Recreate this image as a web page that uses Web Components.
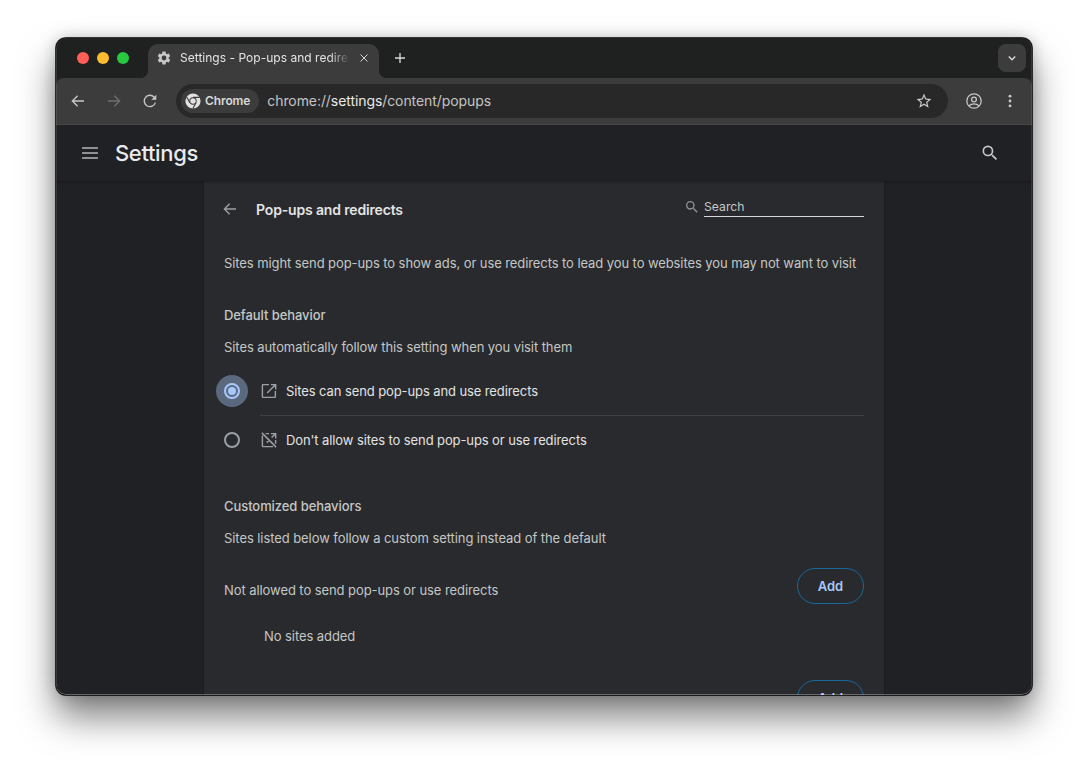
<!DOCTYPE html>
<html>
<head>
<meta charset="utf-8">
<title>Settings - Pop-ups and redirects</title>
<style>
  html, body { margin: 0; height: 100%; background: #fff; overflow: hidden; }
  body { padding: 38px 56px 0; box-sizing: border-box; font-family: Inter, "Liberation Sans", sans-serif; }
</style>
</head>
<body>
<browser-window>
  <tab-strip slot="strip" title-text="Settings - Pop-ups and redirects"></tab-strip>
  <chrome-toolbar slot="toolbar"></chrome-toolbar>
  <settings-header slot="header"></settings-header>
  <popups-page>
    <radio-row checked icon="open" label="Sites can send pop-ups and use redirects"></radio-row>
    <radio-row icon="blocked" divider label="Don't allow sites to send pop-ups or use redirects"></radio-row>
  </popups-page>
</browser-window>

<script>
const ICONS = {
  gear: '<path fill="currentColor" d="M19.14 12.94c.04-.3.06-.61.06-.94s-.02-.64-.07-.94l2.03-1.58a.49.49 0 0 0 .12-.61l-1.92-3.32a.49.49 0 0 0-.59-.22l-2.39.96a7 7 0 0 0-1.62-.94l-.36-2.54a.48.48 0 0 0-.48-.41h-3.84a.48.48 0 0 0-.47.41l-.36 2.54a7.3 7.3 0 0 0-1.62.94l-2.39-.96a.49.49 0 0 0-.59.22L2.74 8.87a.48.48 0 0 0 .12.61l2.03 1.58c-.05.3-.09.63-.09.94s.02.64.07.94l-2.03 1.58a.49.49 0 0 0-.12.61l1.92 3.32c.12.22.37.29.59.22l2.39-.96c.5.38 1.03.7 1.62.94l.36 2.54c.05.24.24.41.48.41h3.84c.24 0 .44-.17.47-.41l.36-2.54a7 7 0 0 0 1.62-.94l2.39.96c.22.08.47 0 .59-.22l1.92-3.32a.47.47 0 0 0-.12-.61l-2.01-1.58zM12 15.6a3.6 3.6 0 1 1 0-7.2 3.6 3.6 0 0 1 0 7.2z"/>',
  close: '<path stroke="currentColor" stroke-width="2" fill="none" d="M5 5l14 14M19 5L5 19"/>',
  plus: '<path stroke="currentColor" stroke-width="2" fill="none" d="M12 4.5v15M4.5 12h15"/>',
  chevron: '<path stroke="currentColor" stroke-width="2.4" fill="none" d="M6.5 9.5L12 15l5.5-5.5"/>',
  back: '<path stroke="currentColor" stroke-width="1.8" fill="none" d="M20 12H5M11.5 5l-7 7 7 7"/>',
  forward: '<path stroke="currentColor" stroke-width="1.8" fill="none" d="M4 12h15M12.5 5l7 7-7 7"/>',
  reload: '<path stroke="currentColor" stroke-width="1.8" fill="none" d="M19.2 14.2A7.6 7.6 0 1 1 17.4 6.6L19.5 8.6"/><path fill="currentColor" d="M20.4 3.8v6.6h-6.6z"/>',
  star: '<path fill="currentColor" d="M22 9.24l-7.19-.62L12 2 9.19 8.63 2 9.24l5.46 4.73L5.82 21 12 17.27 18.18 21l-1.63-7.03zM12 15.4l-3.76 2.27 1-4.28-3.32-2.88 4.38-.38L12 6.1l1.71 4.04 4.38.38-3.32 2.88 1 4.28z"/>',
  account: '<g stroke="currentColor" stroke-width="1.7" fill="none"><circle cx="12" cy="12" r="9.6"/><circle cx="12" cy="10" r="3.2"/><path d="M5.4 18.6c1.6-1.9 4-2.9 6.6-2.9s5 1 6.6 2.9"/></g>',
  dots: '<circle fill="currentColor" cx="12" cy="5.5" r="1.9"/><circle fill="currentColor" cx="12" cy="12" r="1.9"/><circle fill="currentColor" cx="12" cy="18.5" r="1.9"/>',
  menu: '<path stroke="currentColor" stroke-width="1.7" fill="none" d="M2.5 6h19M2.5 12h19M2.5 18h19"/>',
  search: '<path fill="currentColor" d="M15.5 14h-.79l-.28-.27A6.47 6.47 0 0 0 16 9.5 6.5 6.5 0 1 0 9.5 16c1.61 0 3.09-.59 4.23-1.57l.27.28v.79l5 4.99L20.49 19zm-6 0a4.5 4.5 0 1 1 0-9 4.5 4.5 0 0 1 0 9z"/>',
  open: '<path stroke="currentColor" stroke-width="1.9" fill="none" d="M12 3.5H4a.8.8 0 0 0-.8.8v15.4c0 .4.4.8.8.8h15.7c.4 0 .8-.4.8-.8V12M14.5 3.5h6.4v6.4M20.5 3.8L9.5 14.8"/>',
  blocked: '<path stroke="currentColor" stroke-width="1.9" fill="none" d="M3.2 6v14c0 .4.4.8.8.8h13.5M7.5 3.5H12M14.5 3.5h6.4v6.4M20.8 12v5M2.5 2.5l19 19M20.5 3.8l-5 5M12 12.5l-3 3"/>'
};
const icon = (name, size) =>
  `<svg width="${size}" height="${size}" viewBox="0 0 24 24" aria-hidden="true">${ICONS[name]}</svg>`;

class BrowserWindow extends HTMLElement {
  constructor() {
    super();
    this.attachShadow({ mode: 'open' }).innerHTML = `
      <style>
        :host {
          display: flex;
          flex-direction: column;
          position: relative;
          box-sizing: border-box;
          width: 976px;
          height: 657px;
          overflow: hidden;
          border-radius: 10px;
          background: #202124;
          box-shadow: 0 0 0 .5px #000, 0 0 0 1px rgba(0,0,0,.55), 0 22px 36px rgba(0,0,0,.5), 0 0 16px rgba(0,0,0,.22);
          color: #e3e3e3;
        }
        :host::after {
          content: ""; position: absolute; inset: 0; border-radius: 10px; pointer-events: none; z-index: 3;
          box-shadow: inset 0 -1px 0 rgba(255,255,255,.3), inset 1px 0 0 rgba(255,255,255,.1), inset -1px 0 0 rgba(255,255,255,.1);
        }
        main { flex: 1; min-height: 0; overflow: hidden; display: flex; justify-content: center; }
      </style>
      <slot name="strip"></slot>
      <slot name="toolbar"></slot>
      <slot name="header"></slot>
      <main><slot></slot></main>`;
  }
}

class TabStrip extends HTMLElement {
  constructor() {
    super();
    this.attachShadow({ mode: 'open' }).innerHTML = `
      <style>
        :host { display: flex; flex: none; height: 40px; box-sizing: border-box; background: #1f2020; padding: 6px 6px 0 21px; align-items: flex-start; }
        .lights { display: flex; gap: 8px; margin-top: 8px; width: 71px; flex: none; }
        .lights i { width: 12px; height: 12px; border-radius: 50%; }
        .tab {
          position: relative; width: 231px; height: 34px; box-sizing: border-box; flex: none;
          background: #3c3c3c; border-radius: 10px 10px 0 0;
          display: flex; align-items: center; padding: 0 8px 6px 8px;
          font-size: 12px; color: #e3e3e3;
        }
        .tab::before, .tab::after { content: ""; position: absolute; bottom: 0; width: 8px; height: 8px; }
        .tab::before { left: -8px; background: radial-gradient(circle at 0 0, transparent 8px, #3c3c3c 8.5px); }
        .tab::after { right: -8px; background: radial-gradient(circle at 100% 0, transparent 8px, #3c3c3c 8.5px); }
        .gear { display: flex; color: #c7c7c7; margin-right: 8px; }
        .name { flex: 1; min-width: 0; overflow: hidden; white-space: nowrap; letter-spacing: .02px; padding-bottom: 2px;
          -webkit-mask-image: linear-gradient(to right, #000 88%, transparent 100%); mask-image: linear-gradient(to right, #000 88%, transparent 100%); }
        .x { display: flex; color: #d6d6d6; margin-left: 8px; margin-right: 1px; }
        .plus { display: flex; margin: 6px 0 0 13px; color: #d8d8d8; }
        .spacer { flex: 1; }
        .more { width: 28px; height: 28px; border-radius: 8px; background: #3c3c3c; color: #d8d8d8; display: flex; align-items: center; justify-content: center; }
      </style>
      <div class="lights"><i style="background:#ff5f57"></i><i style="background:#febc2e"></i><i style="background:#28c840"></i></div>
      <div class="tab">
        <span class="gear">${icon('gear', 16)}</span>
        <span class="name"></span>
        <span class="x">${icon('close', 12)}</span>
      </div>
      <span class="plus">${icon('plus', 16)}</span>
      <span class="spacer"></span>
      <span class="more">${icon('chevron', 14)}</span>`;
  }
  connectedCallback() {
    this.shadowRoot.querySelector('.name').textContent = this.getAttribute('title-text');
  }
}

class ChromeToolbar extends HTMLElement {
  constructor() {
    super();
    this.attachShadow({ mode: 'open' }).innerHTML = `
      <style>
        :host { display: flex; flex: none; height: 47px; box-sizing: border-box; background: #3c3c3c; border-bottom: 1px solid #4a4a4a; border-radius: 8px 8px 0 0; align-items: center; padding: 0 0 1px 0; color: #c7c7c7; }
        .nav { display: flex; flex: none; width: 36px; justify-content: center; }
        .dim { color: #6f6f6f; }
        .omni { flex: none; width: 772px; height: 34px; margin-left: 8px; box-sizing: border-box; background: #282828; border-radius: 17px; display: flex; align-items: center; padding: 0 15px 0 5px; }
        .chip { display: flex; align-items: center; height: 24px; background: #3c3c3c; border-radius: 12px; padding: 0 9px 0 4px; gap: 4px; font-size: 12px; font-weight: 600; color: #d8d8d8; letter-spacing: -.1px; }
        .url { margin-left: 8px; font-size: 14px; color: #c4c4c4; flex: 1; letter-spacing: -.08px; }
        .url b { font-weight: 400; color: #e8e8e8; }
        .right { display: flex; margin-left: 8px; }
        .right span { width: 36px; display: flex; justify-content: center; }
      </style>
      <span class="nav" style="margin-left:4px">${icon('back', 18)}</span>
      <span class="nav dim">${icon('forward', 18)}</span>
      <span class="nav">${icon('reload', 18)}</span>
      <div class="omni">
        <span class="chip">
          <svg width="16" height="16" viewBox="0 0 16 16" aria-hidden="true">
            <circle cx="8" cy="8" r="7.6" fill="#e2e2e2"/>
            <path stroke="#3c3c3c" stroke-width="1.1" d="M8 4.4h6.6"/>
            <path stroke="#3c3c3c" stroke-width="1.1" d="M8 4.4h6.6" transform="rotate(120 8 8)"/>
            <path stroke="#3c3c3c" stroke-width="1.1" d="M8 4.4h6.6" transform="rotate(240 8 8)"/>
            <circle cx="8" cy="8" r="3.7" fill="#3c3c3c"/><circle cx="8" cy="8" r="2.7" fill="#e2e2e2"/>
          </svg>
          Chrome
        </span>
        <span class="url">chrome://<b>settings</b>/content/popups</span>
        <span style="display:flex">${icon('star', 18)}</span>
      </div>
      <div class="right">
        <span>${icon('account', 18)}</span>
        <span>${icon('dots', 18)}</span>
      </div>`;
  }
}

class SettingsHeader extends HTMLElement {
  constructor() {
    super();
    this.attachShadow({ mode: 'open' }).innerHTML = `
      <style>
        :host { display: flex; flex: none; height: 56px; box-sizing: border-box; align-items: center; padding: 0 32px 0 24px; background: #202124; box-shadow: 0 1px 3px rgba(0,0,0,.3); position: relative; z-index: 1; color: #b4b6b8; }
        h1 { margin: 0 0 0 15px; font-size: 22px; line-height: 28px; font-weight: 500; color: #e8eaed; flex: 1; letter-spacing: -.35px; }
        span { display: flex; }
      </style>
      <span>${icon('menu', 20)}</span>
      <h1>Settings</h1>
      <span style="color:#c7c7c7">${icon('search', 20)}</span>`;
  }
}

class PopupsPage extends HTMLElement {
  constructor() {
    super();
    this.attachShadow({ mode: 'open' }).innerHTML = `
      <style>
        :host { display: block; flex: none; width: 680px; box-sizing: border-box; background: #292a2d; box-shadow: 0 0 0 1px rgba(0,0,0,.12); padding: 0 20px; font-size: 13px; color: #c4c7c5; letter-spacing: -.075px; }
        .top { display: flex; align-items: center; height: 56px; margin-left: -3px; }
        .top .arrow { display: flex; color: #9aa0a6; margin-right: 17px; }
        .top h2 { margin: 0; font-size: 14px; font-weight: 600; color: #e3e3e3; flex: 1; letter-spacing: -.16px; }
        .find { display: flex; align-items: center; gap: 4px; color: #8f9499; margin-bottom: 4px; }
        .find .box { width: 160px; height: 19px; box-sizing: border-box; border-bottom: 1px solid #d5d7da; font-size: 12.2px; color: #c4c7c5; line-height: 17px; letter-spacing: 0; }
        p { margin: 0; }
        .intro { margin-top: 16px; line-height: 20px; white-space: nowrap; letter-spacing: -.085px; }
        h3 { margin: 0; font-size: 13px; line-height: 20px; font-weight: 500; color: #c4c7c5; }
        .sub { line-height: 20px; }
        .default { margin-top: 32px; }
        .default .sub { margin-top: 12px; }
        .radios { margin-top: 9px; letter-spacing: -.1px; }
        .custom { margin-top: 32px; }
        .custom .sub { margin-top: 12px; }
        .row { display: flex; align-items: center; justify-content: space-between; }
        .row.first { margin-top: 20px; }
        .row.first span { padding-top: 8px; }
        .row.second { margin-top: 34px; justify-content: flex-end; }
        .empty { margin: 22px 0 0 40px; line-height: 20px; }
        button {
          width: 67px; height: 36px; border-radius: 18px; border: 1px solid #17699c; background: transparent;
          color: #a8c7fa; font: 600 13px Inter, "Liberation Sans", sans-serif; padding: 0;
        }
      </style>
      <div class="top">
        <span class="arrow">${icon('back', 18)}</span>
        <h2>Pop-ups and redirects</h2>
        <span class="find">${icon('search', 16)}<span class="box">Search</span></span>
      </div>
      <p class="intro">Sites might send pop-ups to show ads, or use redirects to lead you to websites you may not want to visit</p>
      <section class="default">
        <h3>Default behavior</h3>
        <p class="sub">Sites automatically follow this setting when you visit them</p>
        <div class="radios"><slot></slot></div>
      </section>
      <section class="custom">
        <h3>Customized behaviors</h3>
        <p class="sub">Sites listed below follow a custom setting instead of the default</p>
        <div class="row first"><span>Not allowed to send pop-ups or use redirects</span><button>Add</button></div>
        <p class="empty">No sites added</p>
        <div class="row second"><button>Add</button></div>
      </section>`;
  }
}

class RadioRow extends HTMLElement {
  constructor() {
    super();
    this.attachShadow({ mode: 'open' }).innerHTML = `
      <style>
        :host { display: flex; align-items: center; height: 49px; box-sizing: border-box; position: relative; color: #e3e3e3; font-size: 13px; }
        .radio { width: 16px; height: 16px; border-radius: 50%; box-sizing: border-box; border: 2px solid #9aa0a6; flex: none; position: relative; }
        :host([checked]) .radio { border-color: #a8c7fa; }
        :host([checked]) .radio::before { content: ""; position: absolute; inset: -10px; border-radius: 50%; background: #a8c7fa; opacity: .4; }
        :host([checked]) .radio::after { content: ""; position: absolute; inset: 2px; border-radius: 50%; background: #a8c7fa; }
        .body { flex: 1; display: flex; align-items: center; align-self: stretch; margin-left: 20px; gap: 8px; color: #e3e3e3; }
        :host([divider]) .body { border-top: 1px solid #3f4043; }
        .glyph { display: flex; color: #9aa0a6; }
      </style>
      <span class="radio"></span>
      <div class="body"><span class="glyph"></span><span class="text"></span></div>`;
  }
  connectedCallback() {
    this.shadowRoot.querySelector('.glyph').innerHTML = icon(this.getAttribute('icon'), 18);
    this.shadowRoot.querySelector('.text').textContent = this.getAttribute('label');
  }
}

customElements.define('browser-window', BrowserWindow);
customElements.define('tab-strip', TabStrip);
customElements.define('chrome-toolbar', ChromeToolbar);
customElements.define('settings-header', SettingsHeader);
customElements.define('popups-page', PopupsPage);
customElements.define('radio-row', RadioRow);
</script>
</body>
</html>
